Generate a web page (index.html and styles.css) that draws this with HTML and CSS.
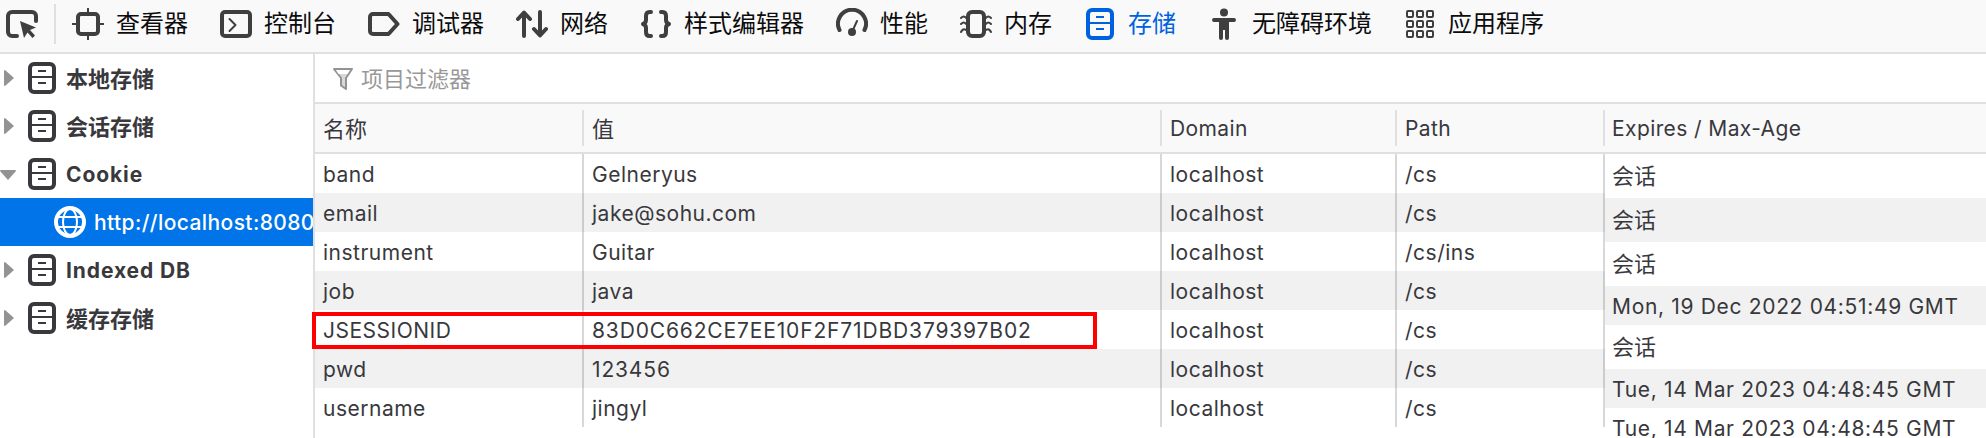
FILE: index.html
```html
<!DOCTYPE html>
<html lang="zh-CN">
<head>
    <meta charset="UTF-8">
    <meta name="viewport" content="width=device-width, initial-scale=1.0">
    <title>存储</title>
    <link rel="stylesheet" href="styles.css">
</head>
<body>

    <!-- Shared icon for the storage tree and the storage tab -->
    <svg class="sprite" width="0" height="0">
        <symbol id="storage" viewBox="0 0 28 32">
            <rect x="2" y="2" width="24" height="28" rx="4" fill="none" stroke="currentColor" stroke-width="4"/>
            <path d="M3 15h22M10 9h8M10 21h8" fill="none" stroke="currentColor" stroke-width="2"/>
        </symbol>
    </svg>

    <div class="toolbar">
        <div class="picker">
            <svg width="32" height="32" viewBox="0 0 32 32">
                <path d="M11 28H6a4 4 0 0 1-4-4V8a4 4 0 0 1 4-4h20a4 4 0 0 1 4 4v5" fill="none" stroke="#3f3f40" stroke-width="4" stroke-linecap="round"/>
                <path d="M14 13l16 6.500-6 2.500 5 5.500-2.500 2.500-5-5.500-3.500 5.500z" fill="#3f3f40"/>
            </svg>
        </div>
        <div class="tab">
            <svg width="32" height="32" viewBox="0 0 32 32">
                <rect x="6" y="6" width="20" height="20" rx="3" fill="none" stroke="#3f3f40" stroke-width="4"/>
                <path d="M16 0v5M16 27v5M0 16h5M27 16h5" stroke="#3f3f40" stroke-width="2"/>
            </svg>
            <span>查看器</span>
        </div>
        <div class="tab">
            <svg width="32" height="32" viewBox="0 0 32 32">
                <rect x="2" y="4" width="28" height="24" rx="3" fill="none" stroke="#3f3f40" stroke-width="4"/>
                <path d="M9.500 11l6 6-6 6" fill="none" stroke="#3f3f40" stroke-width="2" stroke-linecap="round" stroke-linejoin="round"/>
            </svg>
            <span>控制台</span>
        </div>
        <div class="tab">
            <svg width="32" height="32" viewBox="0 0 32 32">
                <path d="M5 6h15.500l9 10-9 10H5a3 3 0 0 1-3-3V9a3 3 0 0 1 3-3z" fill="none" stroke="#3f3f40" stroke-width="4" stroke-linejoin="round"/>
            </svg>
            <span>调试器</span>
        </div>
        <div class="tab">
            <svg width="32" height="32" viewBox="0 0 32 32">
                <path d="M8 28V5M2 11l6-6.500 6 6.500M24 4v23M18 21l6 6.500 6-6.500" fill="none" stroke="#3f3f40" stroke-width="4" stroke-linecap="round" stroke-linejoin="round"/>
            </svg>
            <span>网络</span>
        </div>
        <div class="tab">
            <svg width="32" height="32" viewBox="0 0 32 32">
                <path d="M11 4H9.500Q6 4 6 8v4q0 3-3 4 3 1 3 4v4q0 4 3.500 4H11M21 4h1.500Q26 4 26 8v4q0 3 3 4-3 1-3 4v4q0 4-3.500 4H21" fill="none" stroke="#3f3f40" stroke-width="4" stroke-linecap="round" stroke-linejoin="round"/>
            </svg>
            <span>样式编辑器</span>
        </div>
        <div class="tab">
            <svg width="32" height="32" viewBox="0 0 32 32">
                <path d="M3.500 22a14 14 0 1 1 25 0" fill="none" stroke="#3f3f40" stroke-width="4" stroke-linecap="round"/>
                <path d="M16 24l5-11" stroke="#3f3f40" stroke-width="2" stroke-linecap="round"/>
                <circle cx="16" cy="24" r="4" fill="#3f3f40"/>
            </svg>
            <span>性能</span>
        </div>
        <div class="tab">
            <svg width="32" height="32" viewBox="0 0 32 32">
                <rect x="8" y="4" width="16" height="24" rx="4" fill="none" stroke="#3f3f40" stroke-width="4"/>
                <path d="M6 10q-2-3-5 0M6 16q-2-3-5 0M6 22q-3-2-5 2M26 10q2-3 5 0M26 16q2-3 5 0M26 22q3-2 5 2" fill="none" stroke="#3f3f40" stroke-width="2" stroke-linecap="round"/>
            </svg>
            <span>内存</span>
        </div>
        <div class="tab active">
            <svg width="32" height="32"><use href="#storage"/></svg>
            <span>存储</span>
        </div>
        <div class="tab">
            <svg width="32" height="32" viewBox="0 0 32 32">
                <circle cx="16" cy="4.500" r="4" fill="#3f3f40"/>
                <path d="M6 10h20a2 2 0 0 1 0 4h-5v16a2 2 0 0 1-4 0v-8h-2v8a2 2 0 0 1-4 0V14H6a2 2 0 0 1 0-4z" fill="#3f3f40"/>
            </svg>
            <span>无障碍环境</span>
        </div>
        <div class="tab">
            <svg width="32" height="32" viewBox="0 0 32 32" fill="none" stroke="#3f3f40" stroke-width="2">
                <rect x="3" y="3" width="6" height="6" rx="1"/><rect x="13" y="3" width="6" height="6" rx="1"/><rect x="23" y="3" width="6" height="6" rx="1"/>
                <rect x="3" y="13" width="6" height="6" rx="1"/><rect x="13" y="13" width="6" height="6" rx="1"/><rect x="23" y="13" width="6" height="6" rx="1"/>
                <rect x="3" y="23" width="6" height="6" rx="1"/><rect x="13" y="23" width="6" height="6" rx="1"/><rect x="23" y="23" width="6" height="6" rx="1"/>
            </svg>
            <span>应用程序</span>
        </div>
    </div>

    <div class="main">
        <div class="sidebar">
            <div class="tree-item">
                <svg class="arrow" width="16" height="16" viewBox="0 0 16 16"><path d="M4 1q0-1 1-1l9 8-9 8q-1 0-1-1z"/></svg>
                <svg width="28" height="32"><use href="#storage"/></svg>
                <span>本地存储</span>
            </div>
            <div class="tree-item">
                <svg class="arrow" width="16" height="16" viewBox="0 0 16 16"><path d="M4 1q0-1 1-1l9 8-9 8q-1 0-1-1z"/></svg>
                <svg width="28" height="32"><use href="#storage"/></svg>
                <span>会话存储</span>
            </div>
            <div class="tree-item">
                <svg class="arrow" width="16" height="16" viewBox="0 0 16 16"><path d="M1 4h14q1 0 1 1l-8 9-8-9q0-1 1-1z"/></svg>
                <svg width="28" height="32"><use href="#storage"/></svg>
                <span class="latin">Cookie</span>
            </div>
            <div class="tree-item selected">
                <svg width="32" height="32" viewBox="0 0 32 32" fill="none" stroke="#fff">
                    <circle cx="16" cy="16" r="14" stroke-width="4"/>
                    <ellipse cx="16" cy="16" rx="7" ry="13" stroke-width="2"/>
                    <path d="M4 11h24M4 21h24" stroke-width="2"/>
                </svg>
                <span class="latin">http://localhost:8080</span>
            </div>
            <div class="tree-item">
                <svg class="arrow" width="16" height="16" viewBox="0 0 16 16"><path d="M4 1q0-1 1-1l9 8-9 8q-1 0-1-1z"/></svg>
                <svg width="28" height="32"><use href="#storage"/></svg>
                <span class="latin">Indexed DB</span>
            </div>
            <div class="tree-item">
                <svg class="arrow" width="16" height="16" viewBox="0 0 16 16"><path d="M4 1q0-1 1-1l9 8-9 8q-1 0-1-1z"/></svg>
                <svg width="28" height="32"><use href="#storage"/></svg>
                <span>缓存存储</span>
            </div>
        </div>

        <div class="content">
            <div class="filter">
                <svg width="20" height="22" viewBox="0 0 20 22">
                    <path d="M1 1h18l-6 9v11l-5-3.500V10z" fill="#d8d8d8" stroke="#939395" stroke-width="2" stroke-linejoin="round"/>
                    <path d="M3 2h14l-2.500 4h-9z" fill="#fff"/>
                </svg>
                <span>项目过滤器</span>
            </div>

            <div class="table">
                <div class="column col-name">
                    <div class="header"><span>名称</span></div>
                    <div class="cell">band</div>
                    <div class="cell">email</div>
                    <div class="cell">instrument</div>
                    <div class="cell">job</div>
                    <div class="cell">JSESSIONID</div>
                    <div class="cell">pwd</div>
                    <div class="cell">username</div>
                </div>
                <div class="column col-value">
                    <div class="header"><span>值</span></div>
                    <div class="cell">Gelneryus</div>
                    <div class="cell">jake@sohu.com</div>
                    <div class="cell">Guitar</div>
                    <div class="cell">java</div>
                    <div class="cell digits">83D0C662CE7EE10F2F71DBD379397B02</div>
                    <div class="cell digits">123456</div>
                    <div class="cell">jingyl</div>
                </div>
                <div class="column col-domain">
                    <div class="header"><span>Domain</span></div>
                    <div class="cell">localhost</div>
                    <div class="cell">localhost</div>
                    <div class="cell">localhost</div>
                    <div class="cell">localhost</div>
                    <div class="cell">localhost</div>
                    <div class="cell">localhost</div>
                    <div class="cell">localhost</div>
                </div>
                <div class="column col-path">
                    <div class="header"><span>Path</span></div>
                    <div class="cell">/cs</div>
                    <div class="cell">/cs</div>
                    <div class="cell">/cs/ins</div>
                    <div class="cell">/cs</div>
                    <div class="cell">/cs</div>
                    <div class="cell">/cs</div>
                    <div class="cell">/cs</div>
                </div>
                <div class="column col-expires">
                    <div class="header"><span>Expires / Max-Age</span></div>
                    <div class="cell tall">会话</div>
                    <div class="cell tall">会话</div>
                    <div class="cell tall">会话</div>
                    <div class="cell date">Mon, 19 Dec 2022 04:51:49 GMT</div>
                    <div class="cell tall">会话</div>
                    <div class="cell date">Tue, 14 Mar 2023 04:48:45 GMT</div>
                    <div class="cell date">Tue, 14 Mar 2023 04:48:45 GMT</div>
                </div>
                <!-- red frame around the session cookie -->
                <div class="highlight"></div>
            </div>
        </div>
    </div>

</body>
</html>
```
FILE: styles.css
```css
:root {
    --border: #e0e0e1;
    --splitter: rgba(12, 12, 13, 0.16);
    --bg-toolbar: #f9f9fa;
    --bg-alt: #f1f1f1;
    --text: #38383d;
    --blue: #0061e0;
    --blue-selected: #0074e8;
}

* {
    box-sizing: border-box;
}

html, body {
    height: 100%;
    margin: 0;
    overflow: hidden;
}

body {
    display: flex;
    flex-direction: column;
    font-family: Inter, 'Noto Sans CJK SC', sans-serif;
    font-size: 21px;
    color: var(--text);
    background: #fff;
    white-space: nowrap;
}

svg {
    display: block;
    flex: none;
}

.sprite {
    position: absolute;
}

/* Toolbar */
.toolbar {
    flex: none;
    display: flex;
    align-items: flex-start;
    height: 54px;
    background: var(--bg-toolbar);
    border-bottom: 2px solid var(--border);
    padding-top: 4px;
    color: #0c0c0d;
}

.picker {
    width: 56px;
    height: 40px;
    padding: 4px 0 0 6px;
    border-right: 2px solid var(--border);
    margin-right: 16px;
}

.tab {
    display: flex;
    align-items: center;
    gap: 12px;
    height: 40px;
    margin-right: 32px;
    font-family: 'Noto Sans CJK SC', sans-serif;
    font-size: 24px;
    line-height: 40px;
}

.tab span {
    margin-top: -4px;
}

.tab.active {
    color: var(--blue);
}

/* Storage tree */
.main {
    flex: 1;
    display: flex;
    min-height: 0;
}

.sidebar {
    flex: none;
    width: 315px;
    border-right: 2px solid var(--border);
    overflow: hidden;
}

.tree-item {
    display: flex;
    align-items: center;
    height: 48px;
    font-family: 'Noto Sans CJK SC', sans-serif;
    font-size: 22px;
    font-weight: 700;
}

.tree-item .arrow {
    margin-right: 12px;
    fill: #939395;
}

.tree-item span {
    margin: -3px 0 0 10px;
}

.tree-item .latin {
    margin-top: 0;
    font-family: Inter, sans-serif;
    font-size: 21px;
    letter-spacing: 0.9px;
}

.tree-item.selected {
    padding-left: 54px;
    background: var(--blue-selected);
    color: #fff;
    font-weight: 500;
}

.tree-item.selected span {
    margin-left: 8px;
    letter-spacing: 0.4px;
}

/* Table area */
.content {
    flex: 1;
    min-width: 0;
}

.filter {
    display: flex;
    align-items: center;
    gap: 8px;
    height: 50px;
    padding-left: 18px;
    border-bottom: 2px solid var(--border);
    font-size: 22px;
    color: #989899;
}

.filter svg {
    margin-top: 2px;
}

.filter span {
    margin-top: -2px;
}

.table {
    position: relative;
    display: flex;
}

.column {
    flex: none;
}

.col-name { width: 269px; }
.col-value { width: 578px; }
.col-domain { width: 235px; }
.col-path { width: 208px; }
.col-expires { flex: 1; }

.header {
    height: 50px;
    padding: 6px 0;
    background: var(--bg-toolbar);
    border-bottom: 2px solid var(--border);
}

.header span {
    display: block;
    height: 36px;
    padding-left: 8px;
    line-height: 38px;
    letter-spacing: 0.4px;
    border-right: 2px solid var(--border);
}

.col-name .header span,
.col-value .header span {
    font-size: 22px;
    letter-spacing: 0;
}

.cell {
    height: 39px;
    padding-left: 8px;
    line-height: 41px;
    letter-spacing: 0.5px;
    border-right: 2px solid var(--splitter);
}

.cell:nth-child(odd) {
    background: var(--bg-alt);
}

.cell.digits {
    letter-spacing: 0.85px;
}

.cell.date {
    letter-spacing: 0.67px;
}

.cell.tall {
    height: 44px;
    line-height: 44px;
    font-size: 22px;
    letter-spacing: 0;
}

.col-expires .cell,
.col-expires .header span {
    padding-left: 7px;
    border-right: 0;
}

.highlight {
    position: absolute;
    left: -3px;
    top: 208px;
    width: 785px;
    height: 37px;
    border: 4px solid #fe0000;
}
```
